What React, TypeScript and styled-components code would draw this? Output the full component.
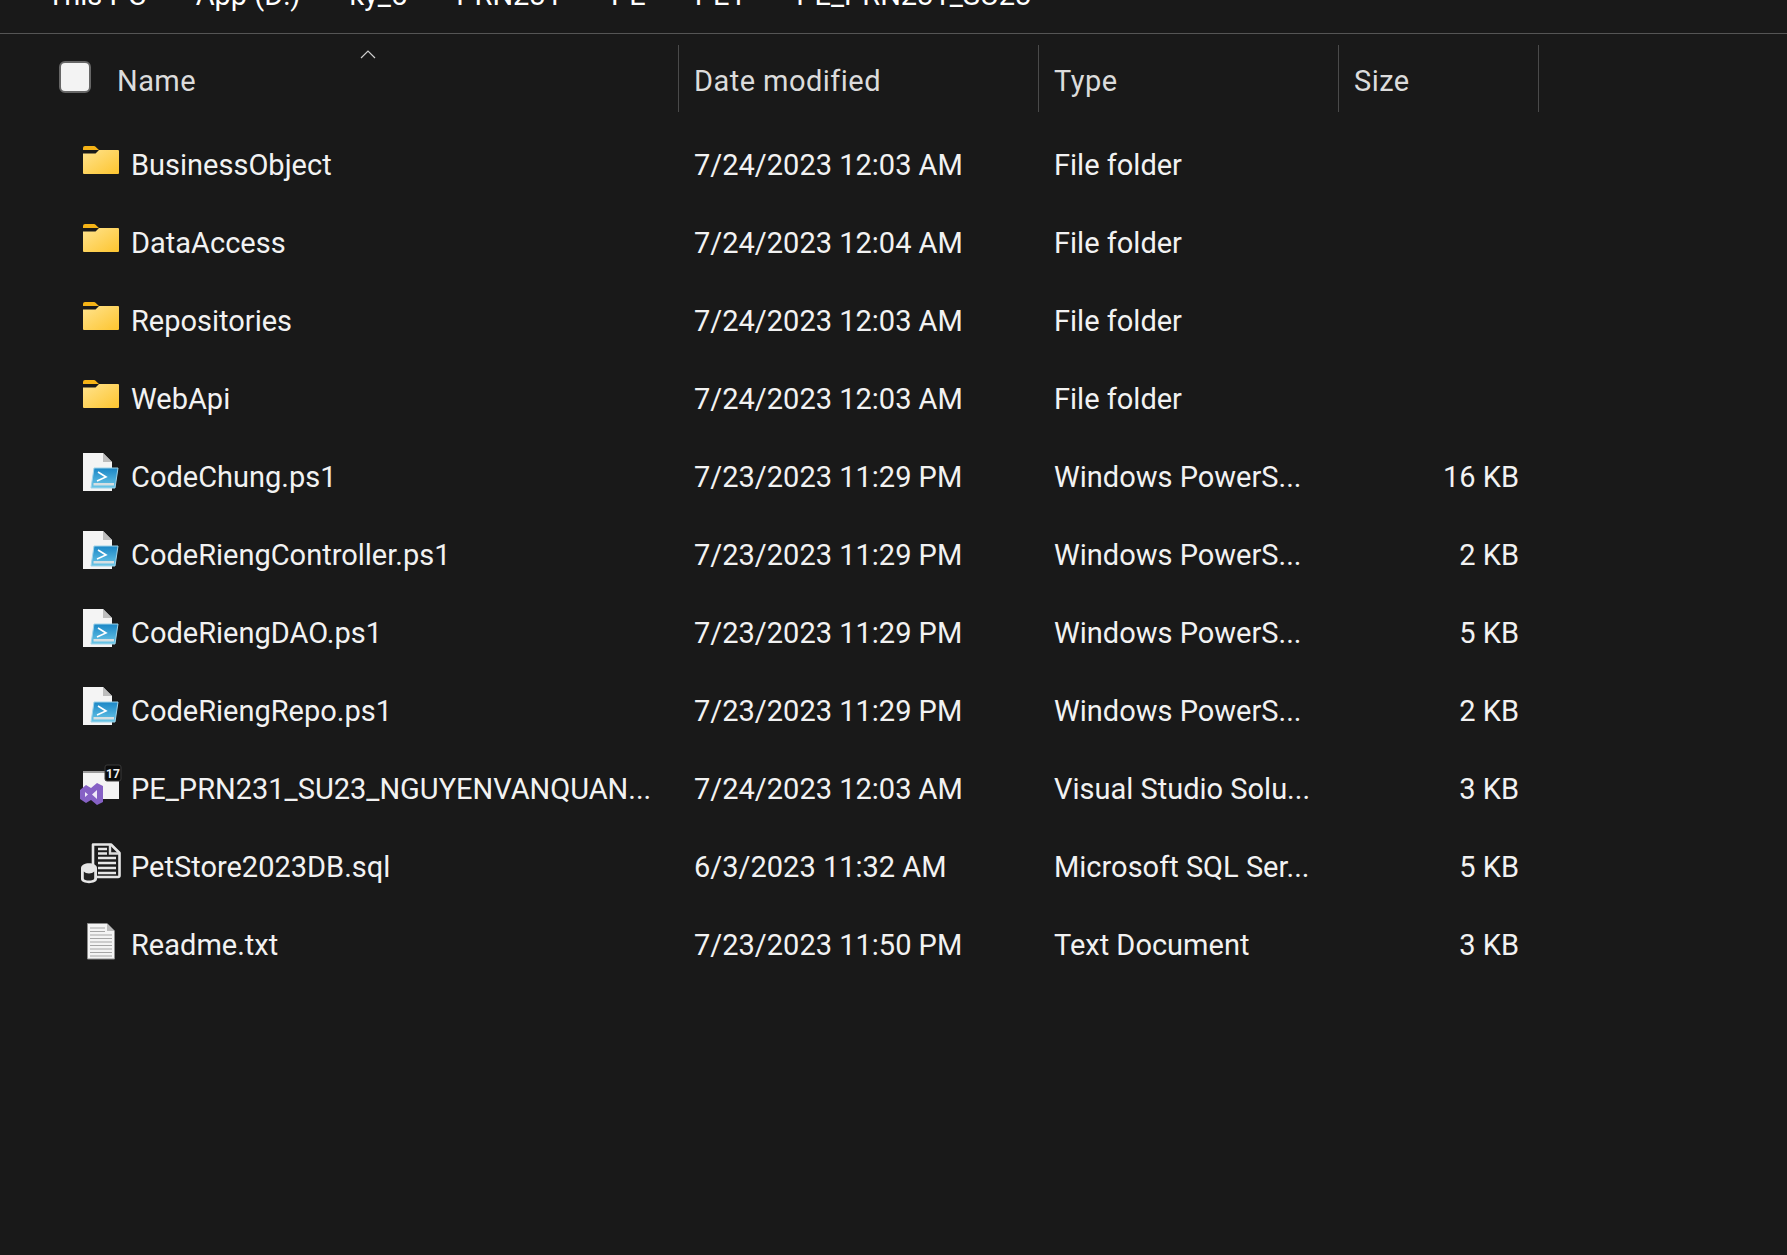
import styled, { createGlobalStyle } from 'styled-components';

const GlobalStyle = createGlobalStyle`
  html, body {
    margin: 0;
    padding: 0;
    background: #191919;
  }
`;

const Page = styled.div`
  width: 1787px;
  height: 1255px;
  overflow: hidden;
  background: #191919;
  color: #f2f2f2;
  font-family: Roboto, 'Noto Sans', sans-serif;
  font-size: 29px;
`;

const Breadcrumb = styled.nav`
  height: 33px;
  overflow: hidden;
  display: flex;
  gap: 49px;
  padding-left: 47px;
  border-bottom: 1px solid #555;
`;

const Crumb = styled.span`
  margin-top: -21px;
  line-height: 32px;
  color: #fff;
  white-space: nowrap;
`;

const Columns = styled.div`
  display: grid;
  grid-template-columns: 679px 360px 300px 200px;
`;

const Header = styled(Columns)`
  height: 67px;
  margin: 11px 0 13px;
`;

const HeaderCell = styled.div<{ $first?: boolean }>`
  display: flex;
  align-items: center;
  position: relative;
  padding: 5px 0 0 ${({ $first }) => ($first ? '59px' : '15px')};
  border-right: 1px solid #4a4a4a;
  color: #dcdcdc;
  letter-spacing: 0.45px;
  white-space: nowrap;
`;

const Check = styled.span`
  width: 28px;
  height: 28px;
  margin: -9px 26px 0 0;
  flex: none;
  border: 2px solid #666;
  border-radius: 6px;
  background: #f3f3f3;
`;

const SortArrow = styled.svg`
  position: absolute;
  left: 360px;
  top: 4px;
`;

const Row = styled(Columns)`
  box-sizing: border-box;
  height: 78px;
  padding-top: 1px;
  align-items: center;
`;

const NameCell = styled.div`
  display: flex;
  align-items: center;
  gap: 11px;
  padding-left: 80px;
  white-space: nowrap;
`;

const TextCell = styled.div`
  padding-left: 15px;
  white-space: nowrap;
`;

const SizeCell = styled.div`
  padding-right: 20px;
  text-align: right;
`;

const IconBox = styled.svg`
  width: 40px;
  height: 40px;
  flex: none;
  overflow: visible;
  margin-top: -9px;
`;

type Kind = 'folder' | 'ps' | 'vs' | 'sql' | 'txt';

function FolderIcon() {
  return (
    <IconBox viewBox="0 0 40 40">
      <defs>
        <linearGradient id="folderFill" x1="0" y1="0" x2="1" y2="1">
          <stop offset="0" stopColor="#ffe38e" />
          <stop offset="1" stopColor="#fdc52f" />
        </linearGradient>
      </defs>
      <path d="M3 8a2 2 0 0 1 2-2h8.500c1.200 0 2 .6 2.800 1.400L19 10H3z" fill="#f5b316" />
      <path d="M3 13.500L15.500 13.500L19 10H38a1 1 0 0 1 1 1v22a1 1 0 0 1-1 1H4a1 1 0 0 1-1-1z" fill="url(#folderFill)" />
    </IconBox>
  );
}

function PsIcon({ id }: { id: string }) {
  return (
    <IconBox viewBox="0 0 40 40">
      <defs>
        <linearGradient id={id} x1="0" y1="0" x2="0" y2="1">
          <stop offset="0" stopColor="#1a86c6" />
          <stop offset="1" stopColor="#6cc8e8" />
        </linearGradient>
      </defs>
      <path d="M3 1H23L32 10V39H3z" fill="#f4f4f4" />
      <path d="M23 1L32 10H23z" fill="#bdbdbd" />
      <path d="M14 16H38L35 36H11z" fill={`url(#${id})`} stroke="#9fd4ea" strokeWidth="1" />
      <path d="M18 20L26 25L17 29" fill="none" stroke="#fff" strokeWidth="1.600" />
      <path d="M13.500 31H34V33.500H13.500z" fill="#d6dfe2" />
    </IconBox>
  );
}

function VsIcon() {
  return (
    <IconBox viewBox="0 0 40 40">
      <path d="M3 7H39V35H3z" fill="#f4f4f4" />
      <path d="M3 7H39V9H3z" fill="#9a9a9a" />
      <path d="M0 26L6 21L11 24L17 19L23 22V38L17 41L11 36L6 39L0 35z" fill="#8661c5" />
      <path d="M5 28L8 30.500L5 33zM17 26V35L12 30.500z" fill="#f0eaf9" />
      <rect x="25" y="1" width="16" height="16" rx="2" fill="#0c0c0c" stroke="#3a3a3a" />
      <text x="33" y="13.500" textAnchor="middle" fontSize="12" fontWeight="700" fontFamily="Roboto, sans-serif" fill="#f2f2f2">
        17
      </text>
    </IconBox>
  );
}

function SqlIcon() {
  return (
    <IconBox viewBox="0 0 40 40">
      <path d="M13 2.500H31L39.500 11V33.500a1.500 1.500 0 0 1-1.500 1.500H13z" fill="#1c1c1c" stroke="#e6e6e6" strokeWidth="2.600" strokeLinejoin="round" />
      <path d="M30 3V11.500H39" fill="none" stroke="#dcdcdc" strokeWidth="2.400" />
      <path d="M18 7H27M18 11.500H27M18 16H36M18 21H36M18 26H36M18 31H36" stroke="#e6e6e6" strokeWidth="2.600" />
      <path d="M1 26c0-6.500 16-6.500 16 0v11c0 5.500-16 5.500-16 0z" fill="#e6e6e6" />
      <path d="M3.800 29.500c2 2.500 8.400 2.500 10.400 0v7c0 2.800-10.400 2.800-10.400 0z" fill="#222" />
    </IconBox>
  );
}

function TxtIcon() {
  return (
    <IconBox viewBox="0 0 40 40">
      <path d="M7.500 3.500H27L34.500 11V39H7.500z" fill="#f4f4f4" stroke="#8c8c8c" />
      <path d="M27 3.500L34.500 11H27z" fill="#bcbcbc" />
      <path
        d="M10 8H25M10 11.500H25M10 15H32M10 18.500H32M10 22H32M10 25.500H32M10 29H32M10 32.500H32M10 36H32"
        stroke="#a6a6a6"
        strokeWidth="1.200"
      />
    </IconBox>
  );
}

function FileIcon({ kind, id }: { kind: Kind; id: string }) {
  if (kind === 'folder') return <FolderIcon />;
  if (kind === 'ps') return <PsIcon id={id} />;
  if (kind === 'vs') return <VsIcon />;
  if (kind === 'sql') return <SqlIcon />;
  return <TxtIcon />;
}

const crumbs = ['This PC', 'App (D:)', 'ky_5', 'PRN231', 'PE', 'PET', 'PE_PRN231_SU23'];

const files: { name: string; date: string; type: string; size: string; kind: Kind }[] = [
  { name: 'BusinessObject', date: '7/24/2023 12:03 AM', type: 'File folder', size: '', kind: 'folder' },
  { name: 'DataAccess', date: '7/24/2023 12:04 AM', type: 'File folder', size: '', kind: 'folder' },
  { name: 'Repositories', date: '7/24/2023 12:03 AM', type: 'File folder', size: '', kind: 'folder' },
  { name: 'WebApi', date: '7/24/2023 12:03 AM', type: 'File folder', size: '', kind: 'folder' },
  { name: 'CodeChung.ps1', date: '7/23/2023 11:29 PM', type: 'Windows PowerS...', size: '16 KB', kind: 'ps' },
  { name: 'CodeRiengController.ps1', date: '7/23/2023 11:29 PM', type: 'Windows PowerS...', size: '2 KB', kind: 'ps' },
  { name: 'CodeRiengDAO.ps1', date: '7/23/2023 11:29 PM', type: 'Windows PowerS...', size: '5 KB', kind: 'ps' },
  { name: 'CodeRiengRepo.ps1', date: '7/23/2023 11:29 PM', type: 'Windows PowerS...', size: '2 KB', kind: 'ps' },
  { name: 'PE_PRN231_SU23_NGUYENVANQUAN...', date: '7/24/2023 12:03 AM', type: 'Visual Studio Solu...', size: '3 KB', kind: 'vs' },
  { name: 'PetStore2023DB.sql', date: '6/3/2023 11:32 AM', type: 'Microsoft SQL Ser...', size: '5 KB', kind: 'sql' },
  { name: 'Readme.txt', date: '7/23/2023 11:50 PM', type: 'Text Document', size: '3 KB', kind: 'txt' },
];

export default function App() {
  return (
    <Page>
      <GlobalStyle />
      <Breadcrumb>
        {crumbs.map((c) => (
          <Crumb key={c}>{c}</Crumb>
        ))}
      </Breadcrumb>
      <Header>
        <HeaderCell $first>
          <Check />
          Name
          <SortArrow width="16" height="10" viewBox="0 0 16 10">
            <path d="M1 9L8 2L15 9" fill="none" stroke="#cfcfcf" strokeWidth="1.200" />
          </SortArrow>
        </HeaderCell>
        <HeaderCell>Date modified</HeaderCell>
        <HeaderCell>Type</HeaderCell>
        <HeaderCell>Size</HeaderCell>
      </Header>
      {files.map((f, i) => (
        <Row key={f.name}>
          <NameCell>
            <FileIcon kind={f.kind} id={`psFill${i}`} />
            {f.name}
          </NameCell>
          <TextCell>{f.date}</TextCell>
          <TextCell>{f.type}</TextCell>
          <SizeCell>{f.size}</SizeCell>
        </Row>
      ))}
    </Page>
  );
}
